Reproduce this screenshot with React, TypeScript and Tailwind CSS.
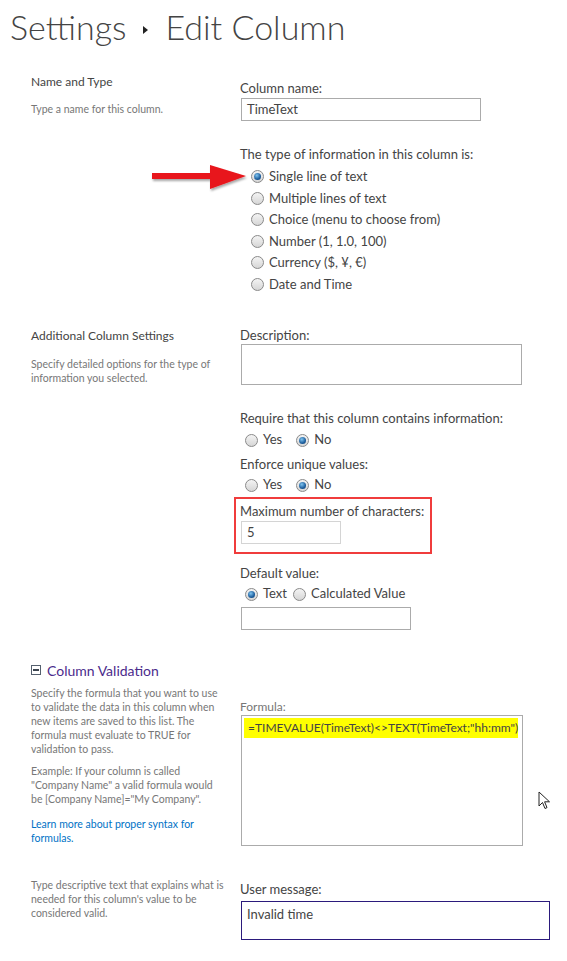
import React from "react";

const font = { fontFamily: 'Lato, "Open Sans", "Liberation Sans", sans-serif' };

function Radio({ checked }: { checked?: boolean }) {
  return (
    <span className="relative inline-flex h-[13px] w-[13px] shrink-0 items-center justify-center rounded-full border border-[#8a8a8a] bg-gradient-to-b from-[#f4f4f4] to-[#d6d6d6]">
      {checked && (
        <span className="h-[7px] w-[7px] rounded-full bg-[radial-gradient(circle_at_40%_35%,#7fc4f0,#1c5d9c_60%,#0e3d6e)]" />
      )}
    </span>
  );
}

function RadioRow({ label, checked }: { label: string; checked?: boolean }) {
  return (
    <div className="flex h-[21.5px] items-center gap-[5px] whitespace-nowrap pl-[11px] text-[13px] text-[#444]">
      <Radio checked={checked} />
      <span>{label}</span>
    </div>
  );
}

function Label({ children, className = "" }: { children: React.ReactNode; className?: string }) {
  return (
    <div className={`h-[18px] whitespace-nowrap text-[13px] leading-[18px] text-[#444] ${className}`}>{children}</div>
  );
}

function Arrow() {
  return (
    <svg className="absolute left-[150px] top-[162px]" width="100" height="32" viewBox="0 0 100 32">
      <defs>
        <filter id="sh" x="-10%" y="-30%" width="130%" height="170%">
          <feDropShadow dx="1" dy="2" stdDeviation="1.2" floodColor="#000" floodOpacity="0.35" />
        </filter>
      </defs>
      <g filter="url(#sh)">
        <rect x="2" y="11" width="60" height="6" fill="#e8141b" />
        <polygon points="60,3 96,14 60,27" fill="#e8141b" />
      </g>
    </svg>
  );
}

function Cursor() {
  return (
    <svg className="absolute left-[538px] top-[791px]" width="14" height="20" viewBox="0 0 14 20">
      <path d="M1 1 L1 15 L4.5 11.5 L7 17.5 L9 16.6 L6.6 10.8 L11.5 10.8 Z" fill="#fff" stroke="#222" strokeWidth="1" strokeLinejoin="round" />
    </svg>
  );
}

const desc = "whitespace-nowrap text-[10.5px] leading-[14px] text-[#777]";

export default function App() {
  return (
    <div className="relative h-[961px] w-[567px] overflow-hidden bg-white" style={font}>
      {/* Title */}
      <h1 className="flex h-[54px] items-center whitespace-nowrap pl-[10px] text-[34px] font-light leading-none text-[#444]">
        <span>Settings</span>
        <svg className="ml-[17px] mr-[17px] mt-[5px]" width="5" height="8" viewBox="0 0 5 8">
          <polygon points="0,0 5,4 0,8" fill="#222" />
        </svg>
        <span>Edit Column</span>
      </h1>

      {/* Name and Type */}
      <div className="flex">
        <div className="w-[209px] shrink-0 pl-[31px] pt-[20px]">
          <div className="text-[12px] leading-[16px] text-[#444]">Name and Type</div>
          <div className={`mt-[12px] ${desc}`}>Type a name for this column.</div>
        </div>
        <div className="pl-[31px] pt-[25px]">
          <Label>Column name:</Label>
          <div className="ml-[1px] mt-[1px] flex h-[23px] w-[240px] items-center border border-[#ababab] px-[5px] text-[13px] text-[#444]">
            TimeText
          </div>
          <Label className="mt-[24px]">The type of information in this column is:</Label>
          <div className="mt-[3px]">
            <RadioRow label="Single line of text" checked />
            <RadioRow label="Multiple lines of text" />
            <RadioRow label="Choice (menu to choose from)" />
            <RadioRow label="Number (1, 1.0, 100)" />
            <RadioRow label="Currency ($, ¥, €)" />
            <RadioRow label="Date and Time" />
          </div>
        </div>
      </div>

      {/* Additional Column Settings */}
      <div className="flex">
        <div className="w-[209px] shrink-0 pl-[31px] pt-[33px]">
          <div className="whitespace-nowrap text-[12px] leading-[16px] text-[#444]">Additional Column Settings</div>
          <div className={`mt-[13px] ${desc}`}>
            Specify detailed options for the type of
            <br />
            information you selected.
          </div>
        </div>
        <div className="pl-[31px] pt-[31px]">
          <Label>Description:</Label>
          <div className="ml-[1px] h-[41px] w-[281px] border border-[#ababab]" />
          <Label className="mt-[24px]">Require that this column contains information:</Label>
          <div className="mt-[2px] flex h-[22px] items-center gap-[5px] pl-[5px] text-[13px] text-[#444]">
            <Radio /> <span className="mr-[9px]">Yes</span> <Radio checked /> <span>No</span>
          </div>
          <Label className="mt-[4px]">Enforce unique values:</Label>
          <div className="mt-[1px] flex h-[22px] items-center gap-[5px] pl-[5px] text-[13px] text-[#444]">
            <Radio /> <span className="mr-[9px]">Yes</span> <Radio checked /> <span>No</span>
          </div>
          <div className="-ml-[6px] mt-[1px] h-[57px] w-[198px] border-2 border-[#f03c3c] pl-[4px] pt-[3px]">
            <Label>Maximum number of characters:</Label>
            <div className="ml-[1px] mt-[1px] flex h-[23px] w-[100px] items-center border border-[#d4d4d4] px-[5px] text-[13px] text-[#444]">
              5
            </div>
          </div>
          <Label className="mt-[10px]">Default value:</Label>
          <div className="mt-[1px] flex h-[22px] items-center gap-[5px] whitespace-nowrap pl-[5px] text-[13px] text-[#444]">
            <Radio checked /> <span className="mr-[1px]">Text</span> <Radio /> <span>Calculated Value</span>
          </div>
          <div className="ml-[1px] mt-[2px] h-[23px] w-[170px] border border-[#ababab]" />
        </div>
      </div>

      {/* Column Validation */}
      <div className="flex">
        <div className="w-[209px] shrink-0 pl-[31px] pt-[31px]">
          <div className="flex h-[18px] items-center gap-[6px] whitespace-nowrap text-[14px] text-[#4b2b8c]">
            <svg width="10" height="10" viewBox="0 0 10 10">
              <rect x="0.5" y="0.5" width="9" height="9" fill="#fff" stroke="#55606e" />
              <rect x="2" y="4" width="6" height="2" fill="#3c4550" />
            </svg>
            <span>Column Validation</span>
          </div>
          <div className={`mt-[7px] ${desc}`}>
            Specify the formula that you want to use
            <br />
            to validate the data in this column when
            <br />
            new items are saved to this list. The
            <br />
            formula must evaluate to TRUE for
            <br />
            validation to pass.
          </div>
          <div className={`mt-[8px] ${desc}`}>
            Example: If your column is called
            <br />
            "Company Name" a valid formula would
            <br />
            be [Company Name]="My Company".
          </div>
          <div className="mt-[11px] whitespace-nowrap text-[10.5px] leading-[14px] text-[#0072c6]">
            Learn more about proper syntax for
            <br />
            formulas.
          </div>
        </div>
        <div className="pl-[31px] pt-[68px]">
          <div className="h-[17px] text-[12px] leading-[17px] text-[#777]">Formula:</div>
          <div className="ml-[1px] h-[131px] w-[282px] border border-[#ababab] p-[2px]">
            <div className="flex h-[20px] w-[274px] items-center whitespace-nowrap bg-[#ffff00] pl-[4px] text-[12px] text-[#444]">
              =TIMEVALUE(TimeText)&lt;&gt;TEXT(TimeText;"hh:mm")
            </div>
          </div>
        </div>
      </div>

      {/* User message */}
      <div className="flex">
        <div className="w-[209px] shrink-0 pl-[31px] pt-[32px]">
          <div className={desc}>
            Type descriptive text that explains what is
            <br />
            needed for this column's value to be
            <br />
            considered valid.
          </div>
        </div>
        <div className="pl-[31px] pt-[34px]">
          <Label>User message:</Label>
          <div className="ml-[1px] mt-[3px] h-[39px] w-[309px] border border-[#2b1a7c] px-[5px] pt-[3px] text-[13px] text-[#444]">
            Invalid time
          </div>
        </div>
      </div>

      <Arrow />
      <Cursor />
    </div>
  );
}
